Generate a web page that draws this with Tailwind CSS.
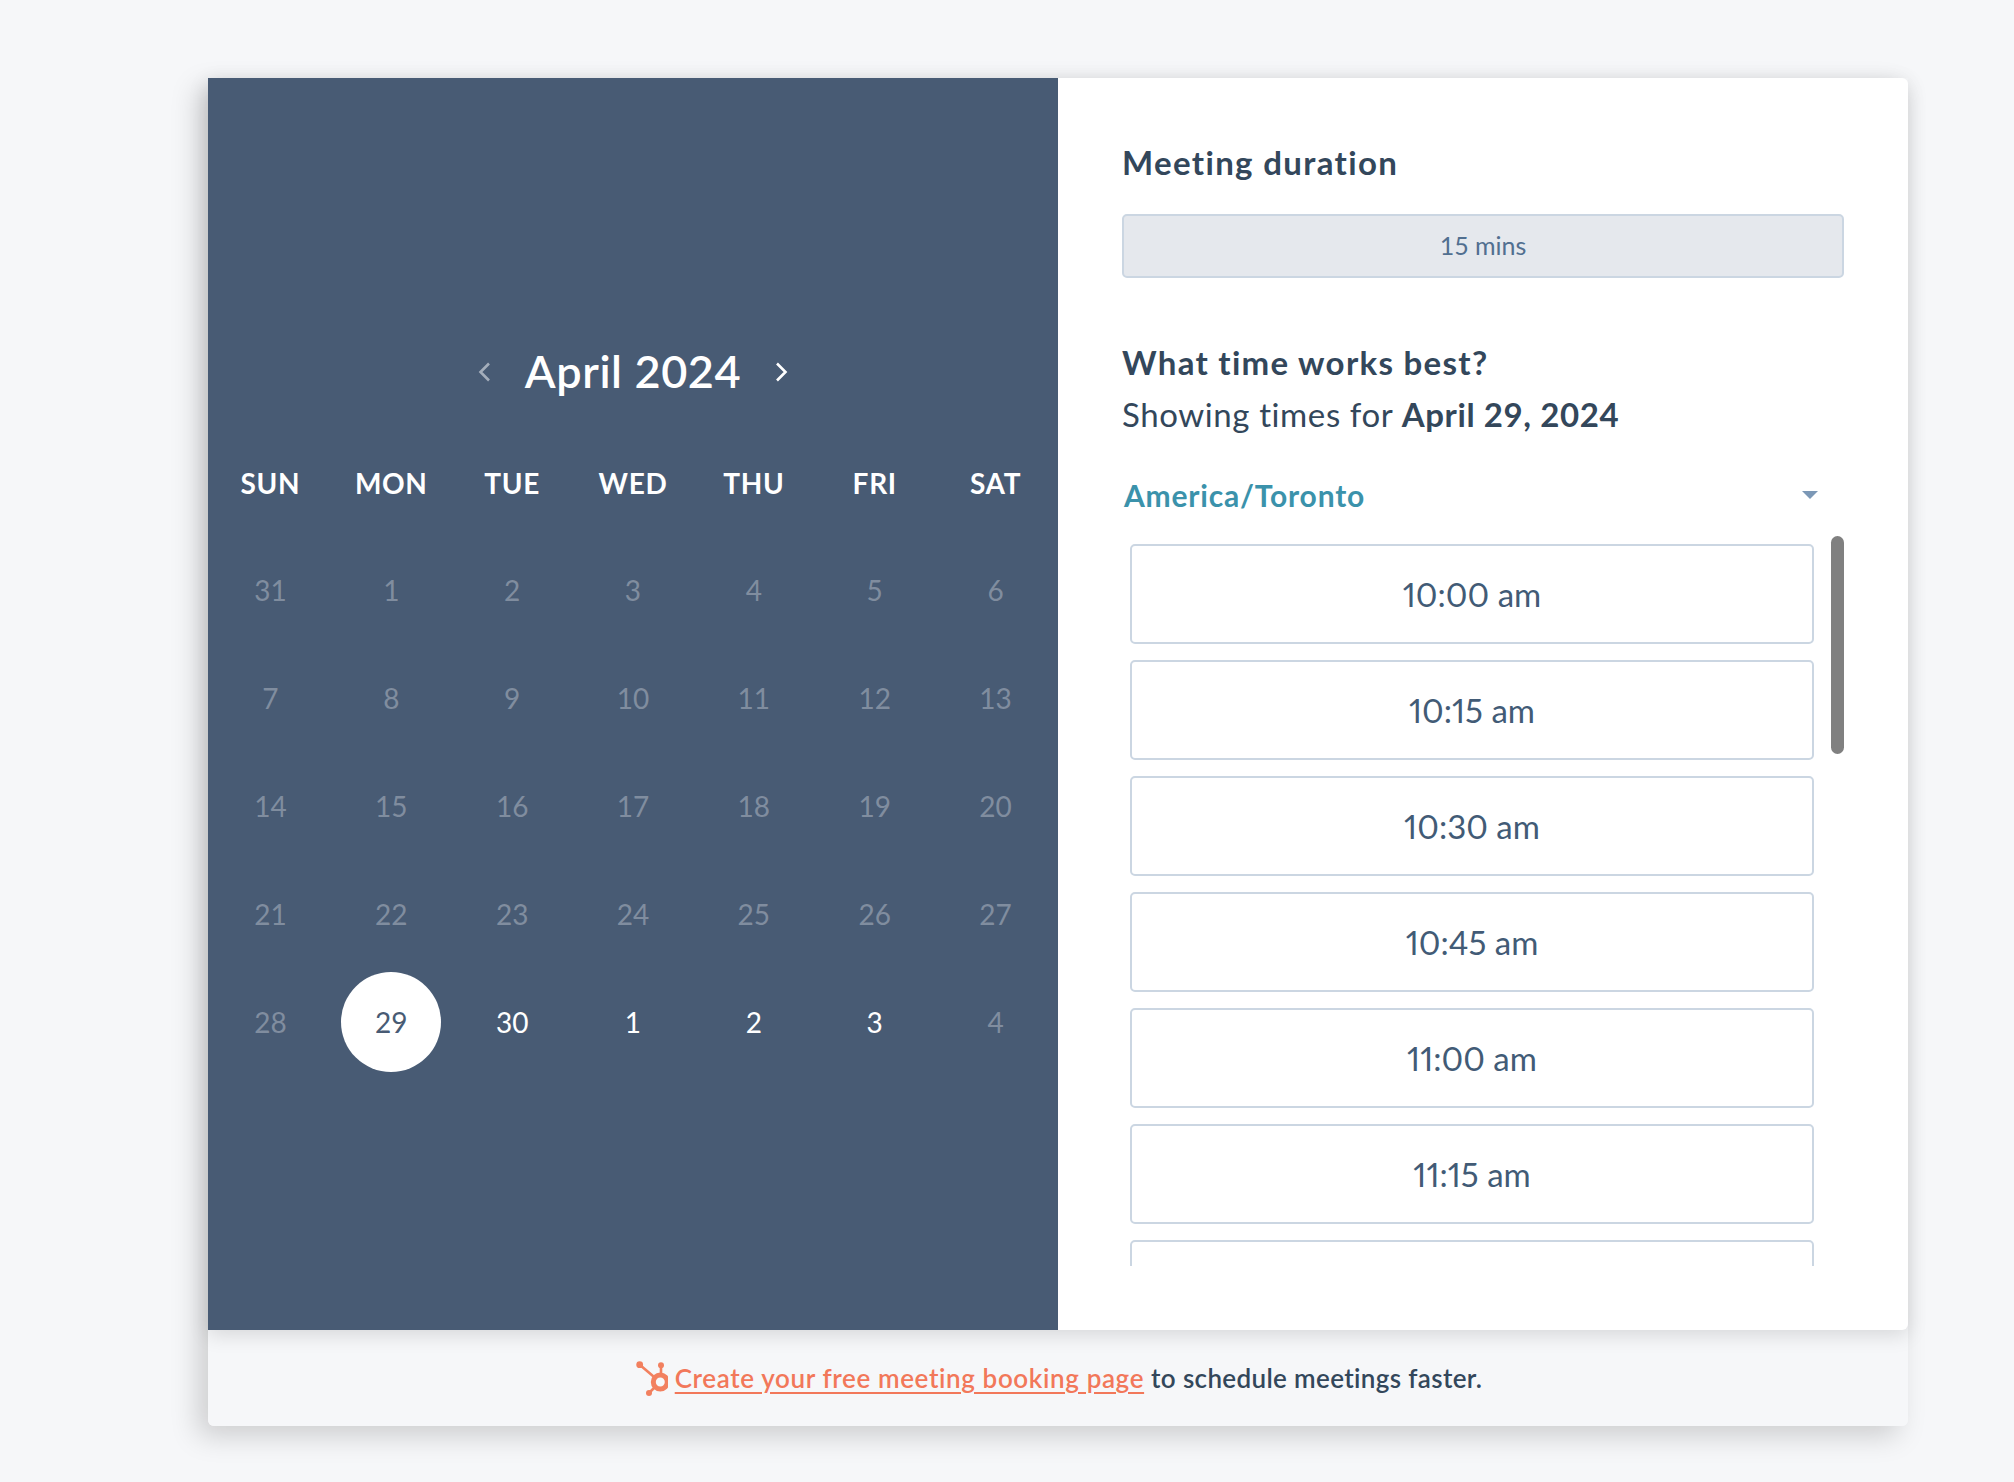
<!DOCTYPE html>
<html lang="en">
<head>
  <meta charset="UTF-8">
  <meta name="viewport" content="width=device-width, initial-scale=1.0">
  <title>Book a meeting</title>
  <script src="https://cdn.jsdelivr.net/npm/@tailwindcss/browser@4"></script>
</head>
<body class="bg-[#f6f7f9] min-h-screen font-['Lato',sans-serif] text-[#33475b]">
  <div class="pt-[78px] pl-[208px] w-[2014px] h-[1482px] overflow-hidden">
    <div class="w-[1700px] rounded-b-[6px] shadow-[-10px_10px_28px_rgba(0,0,0,0.17)]">
      <!-- Main card -->
      <div class="relative z-10 flex h-[1252px] bg-white rounded-r-[6px] shadow-[0_5px_20px_rgba(0,0,0,0.13)]">
        <!-- Calendar -->
        <div class="w-[850px] bg-[#485b74] pt-[264px] text-white">
          <div class="flex items-center justify-center h-[60px]">
            <svg class="w-[13px] h-[20px]" viewBox="0 0 13 20" fill="none" stroke="#a4aebb" stroke-width="2.6"><path d="M11 1.500L2.500 10L11 18.500"/></svg>
            <h2 class="mx-[34px] text-[45px] font-semibold tracking-[0.6px]">April 2024</h2>
            <svg class="w-[13px] h-[20px]" viewBox="0 0 13 20" fill="none" stroke="#ffffff" stroke-width="2.6"><path d="M2 1.500L10.500 10L2 18.500"/></svg>
          </div>
          <div class="grid grid-cols-7 w-[846px] mx-auto mt-[60px] h-[40px] items-center text-center text-[28px] font-bold tracking-[0.7px]">
            <div>SUN</div><div>MON</div><div>TUE</div><div>WED</div><div>THU</div><div>FRI</div><div>SAT</div>
          </div>
          <div class="grid grid-cols-7 auto-rows-[108px] w-[846px] mx-auto mt-[34px] items-center justify-items-center text-[28px] text-[#808d9f]">
            <div>31</div><div>1</div><div>2</div><div>3</div><div>4</div><div>5</div><div>6</div>
            <div>7</div><div>8</div><div>9</div><div>10</div><div>11</div><div>12</div><div>13</div>
            <div>14</div><div>15</div><div>16</div><div>17</div><div>18</div><div>19</div><div>20</div>
            <div>21</div><div>22</div><div>23</div><div>24</div><div>25</div><div>26</div><div>27</div>
            <div>28</div>
            <div class="flex items-center justify-center w-[100px] h-[100px] rounded-full bg-white text-[#485b74]">29</div>
            <div class="text-white">30</div><div class="text-white">1</div><div class="text-white">2</div><div class="text-white">3</div><div>4</div>
          </div>
        </div>

        <!-- Duration and times -->
        <div class="w-[850px] px-[64px] pt-[61px]">
          <h3 class="h-[46px] leading-[46px] text-[33px] font-bold tracking-[1.35px]">Meeting duration</h3>
          <div class="flex items-center justify-center h-[64px] mt-[29px] bg-[#e5e8ed] border-2 border-[#cbd6e2] rounded-[5px] text-[25px] text-[#516f90]">15 mins</div>
          <h3 class="h-[46px] leading-[46px] mt-[61px] text-[33px] font-bold tracking-[1.3px]">What time works best?</h3>
          <p class="h-[52px] leading-[52px] mt-[3px] text-[33px] tracking-[0.6px]">Showing times for <strong class="font-bold">April 29, 2024</strong></p>
          <div class="flex items-center justify-between h-[44px] mt-[33px] pl-[2px] pr-[26px] text-[#3b92ab]">
            <span class="text-[30px] font-bold tracking-[0.8px]">America/Toronto</span>
            <span class="w-0 h-0 border-x-[8px] border-x-transparent border-t-[8px] border-t-[#7c98b6]"></span>
          </div>
          <!-- Scrolling slot list -->
          <div class="relative h-[730px] mt-[19px] overflow-hidden pt-[8px] pl-[8px] pr-[30px] text-[33px] text-[#425b76] [font-variant-numeric:proportional-nums]">
            <div class="flex flex-col gap-[16px]">
              <div class="flex flex-none items-center justify-center h-[100px] pt-[2px] border-2 border-[#cbd6e2] rounded-[5px]">10:00 am</div>
              <div class="flex flex-none items-center justify-center h-[100px] pt-[2px] border-2 border-[#cbd6e2] rounded-[5px]">10:15 am</div>
              <div class="flex flex-none items-center justify-center h-[100px] pt-[2px] border-2 border-[#cbd6e2] rounded-[5px]">10:30 am</div>
              <div class="flex flex-none items-center justify-center h-[100px] pt-[2px] border-2 border-[#cbd6e2] rounded-[5px]">10:45 am</div>
              <div class="flex flex-none items-center justify-center h-[100px] pt-[2px] border-2 border-[#cbd6e2] rounded-[5px]">11:00 am</div>
              <div class="flex flex-none items-center justify-center h-[100px] pt-[2px] border-2 border-[#cbd6e2] rounded-[5px]">11:15 am</div>
              <div class="flex flex-none items-center justify-center h-[100px] pt-[2px] border-2 border-[#cbd6e2] rounded-[5px]"></div>
            </div>
            <div class="absolute top-0 right-0 w-[13px] h-[218px] rounded-full bg-[#808080]"></div>
          </div>
        </div>
      </div>

      <!-- Footer -->
      <div class="flex items-center justify-center h-[96px] bg-[#f6f7f9] rounded-b-[6px] text-[26px] font-semibold">
        <svg class="w-[34px] h-[40px] mr-[7px]" viewBox="0 0 34 40" fill="none">
          <path d="M5.700 6.700L26 24M27 7.300V24M15 35L26 24" stroke="#f2805f" stroke-width="2.600"/>
          <circle cx="5.700" cy="6.700" r="3.400" fill="#f2805f"/>
          <circle cx="27" cy="7.300" r="3" fill="#f2805f"/>
          <circle cx="15" cy="35" r="3" fill="#f2805f"/>
          <circle cx="26.300" cy="24" r="7" fill="#f6f7f9" stroke="#f2805f" stroke-width="5"/>
        </svg>
        <a href="#" class="text-[#f2785a] underline underline-offset-[4px] tracking-[0.62px]">Create your free meeting booking page</a>
        <span class="ml-[7px] tracking-[0.35px]">to schedule meetings faster.</span>
      </div>
    </div>
  </div>
</body>
</html>
